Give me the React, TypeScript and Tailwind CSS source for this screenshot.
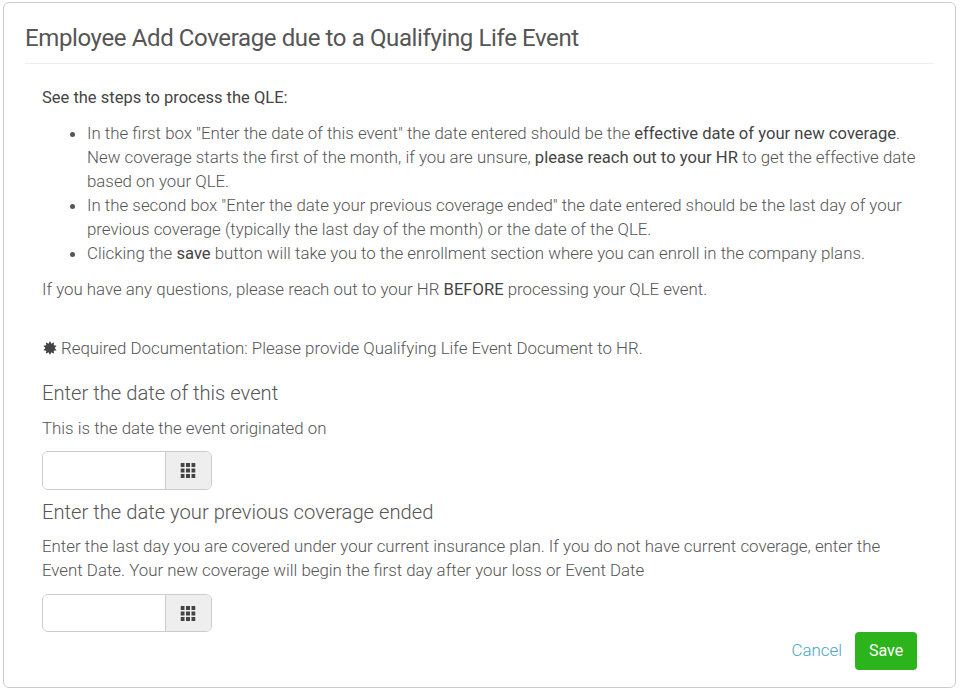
import React from "react";

function CalIcon() {
  return (
    <svg width="15" height="15" viewBox="0 0 15 15" fill="#444" className="-translate-x-[0.5px]">
      {[0, 5.5, 11].map((y) =>
        [0, 5.5, 11].map((x) => <rect key={`${x}-${y}`} x={x} y={y} width="4" height="4" />)
      )}
    </svg>
  );
}

function Star() {
  const n = 20;
  const pts = Array.from({ length: n }, (_, i) => {
    const a = (i * 2 * Math.PI) / n;
    const r = i % 2 === 0 ? 6.7 : 4.4;
    return `${(6.7 + r * Math.sin(a)).toFixed(2)},${(6.7 - r * Math.cos(a)).toFixed(2)}`;
  }).join(" ");
  return (
    <svg width="14" height="14" viewBox="0 0 13.4 13.4" fill="#444" className="inline-block mr-[4px] ml-[1px] align-[-1px]">
      <polygon points={pts} />
    </svg>
  );
}

function DateInput({ h }: { h: string }) {
  return (
    <div className={`flex ${h} w-[170px] rounded-[6px] border border-[#ccc] overflow-hidden`}>
      <div className="w-[122px] bg-white" />
      <div className="flex-1 flex items-center justify-center bg-[#eee] border-l border-[#ccc]">
        <CalIcon />
      </div>
    </div>
  );
}

function B({ children }: { children: React.ReactNode }) {
  return <b className="font-normal text-[16.6px] leading-none text-[#444]">{children}</b>;
}

export default function App() {
  return (
    <div className="h-[691px] w-[960px] bg-white pl-[3px] pr-[4px] pt-[2px] pb-[3px] font-['Roboto',sans-serif] font-light text-[16.85px] leading-[24px] text-[#555]">
      <div className="h-full rounded-[6px] border border-[#ccc] px-[21px] pt-[17px] flex flex-col">
        <h1 className="text-[24px] tracking-[-0.38px] leading-[36px] font-normal text-[#555] pb-[7px] border-b border-[#eee]">
          Employee Add Coverage due to a Qualifying Life Event
        </h1>
        <div className="pl-[17px] pr-[10px] pt-[22px] flex-1 flex flex-col">
          <p className="font-normal text-[16.5px] text-[#444]">See the steps to process the QLE:</p>
          <ul className="list-disc pl-[45px] mt-[11px]">
            <li>
              In the first box "Enter the date of this event" the date entered should be the{" "}
              <B>effective date of your new coverage</B>. New coverage starts the first of the month, if you are unsure,{" "}
              <B>please reach out to your HR</B> to get the effective date based on your QLE.
            </li>
            <li>
              In the second box "Enter the date your previous coverage ended" the date entered should be the last day of your previous coverage (typically the last day of the month) or the date of the QLE.
            </li>
            <li>
              Clicking the <B>save</B> button will take you to the enrollment section where you can enroll in the company plans.
            </li>
          </ul>
          <p className="mt-[12px]">
            If you have any questions, please reach out to your HR <B>BEFORE</B> processing your QLE event.
          </p>
          <p className="mt-[35px]">
            <Star />Required Documentation: Please provide Qualifying Life Event Document to HR.
          </p>
          <h2 className="mt-[18px] text-[20.2px] leading-[30px] font-light">Enter the date of this event</h2>
          <p className="mt-[8px]">This is the date the event originated on</p>
          <div className="mt-[11px]"><DateInput h="h-[39px]" /></div>
          <h2 className="mt-[7px] text-[20.2px] leading-[30px] font-light">Enter the date your previous coverage ended</h2>
          <p className="mt-[7px]">
            Enter the last day you are covered under your current insurance plan. If you do not have current coverage, enter the Event Date. Your new coverage will begin the first day after your loss or Event Date
          </p>
          <div className="mt-[12px]"><DateInput h="h-[38px]" /></div>
          <div className="flex justify-end items-center gap-[13px] mr-[7px]">
            <span className="text-[#4ba6c4] -translate-y-[1px]">Cancel</span>
            <button className="h-[38px] w-[62px] rounded-[4px] bg-[#2cb41c] text-white font-normal text-[16px]">Save</button>
          </div>
        </div>
      </div>
    </div>
  );
}
